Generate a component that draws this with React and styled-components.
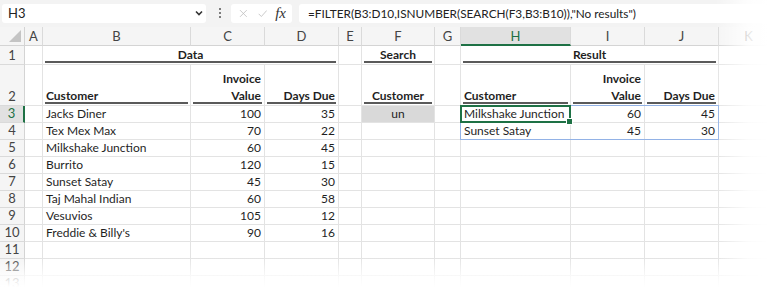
import styled, { createGlobalStyle, css } from "styled-components";

const GlobalStyle = createGlobalStyle`
  html, body {
    margin: 0;
    padding: 0;
    background: #ffffff;
  }
  body {
    font-family: Lato, "Liberation Sans", sans-serif;
    color: #1f1f1f;
  }
`;

const Frame = styled.div`
  position: relative;
  width: 768px;
  height: 287px;
  overflow: hidden;
  background: #ffffff;
`;

const FormulaBar = styled.div`
  display: flex;
  align-items: center;
  height: 27px;
  padding: 0 0 1px 2px;
  box-sizing: border-box;
  background: #f3f3f3;
`;

const NameBox = styled.div`
  display: flex;
  align-items: center;
  justify-content: space-between;
  width: 204px;
  height: 19px;
  box-sizing: border-box;
  padding: 0 2px 0 6px;
  background: #ffffff;
  border-radius: 3px;
  font-size: 13px;
  color: #222;
`;

const Dots = styled.div`
  display: flex;
  flex-direction: column;
  gap: 2px;
  margin: 0 10px 0 13px;
  span {
    width: 2px;
    height: 2px;
    border-radius: 1px;
    background: #555;
  }
`;

const EditButtons = styled.div`
  display: flex;
  align-items: center;
  gap: 10px;
  width: 61px;
  height: 19px;
  box-sizing: border-box;
  padding: 0 6px 0 8px;
  background: #ffffff;
  border-radius: 3px;
`;

const Fx = styled.span`
  font-family: "Liberation Serif", serif;
  font-style: italic;
  font-size: 15px;
  color: #333;
  margin-left: -2px;
`;

const FormulaInput = styled.div`
  flex: 1;
  height: 19px;
  margin-left: 7px;
  padding-left: 9px;
  display: flex;
  align-items: center;
  background: #ffffff;
  border-radius: 3px;
  font-size: 11.8px;
  color: #222;
  white-space: nowrap;
`;

const Sheet = styled.div`
  display: grid;
  grid-template-columns: 25px 18px 148px 74px 74px 23px 73px 26px 110px 74px 74px 60px;
  grid-template-rows: 19px 19px 41px repeat(11, 17px);
  font-size: 12px;
`;

const place = css`
  grid-column: ${(p) => p.$col + 1} / span ${(p) => p.$span || 1};
  grid-row: ${(p) => p.$row + 1} / span ${(p) => p.$rows || 1};
`;

const Corner = styled.div`
  ${place}
  position: relative;
  background: #f5f5f5;
  border-right: 1px solid #d4d4d4;
  border-bottom: 1px solid #d4d4d4;
  &::after {
    content: "";
    position: absolute;
    right: 3px;
    bottom: 3px;
    width: 0;
    height: 0;
    border-left: 12px solid transparent;
    border-bottom: 12px solid #c4c4c4;
  }
`;

const ColHead = styled.div`
  ${place}
  display: flex;
  align-items: center;
  justify-content: center;
  background: ${(p) => (p.$active ? "#e1e1e1" : "#f5f5f5")};
  color: ${(p) => (p.$active ? "#1e7145" : "#444")};
  border-right: 1px solid #dadada;
  border-bottom: ${(p) => (p.$active ? "2px solid #1e7145" : "1px solid #d4d4d4")};
  box-sizing: border-box;
  font-size: 13px;
`;

const RowHead = styled.div`
  ${place}
  display: flex;
  align-items: flex-end;
  justify-content: center;
  box-sizing: border-box;
  padding-bottom: 1px;
  line-height: 15px;
  background: ${(p) => (p.$active ? "#e1e1e1" : "#f5f5f5")};
  color: ${(p) => (p.$active ? "#1e7145" : "#444")};
  border-right: ${(p) => (p.$active ? "2px solid #1e7145" : "1px solid #d4d4d4")};
  border-bottom: 1px solid #dadada;
  font-size: 13px;
`;

const Cell = styled.div`
  ${place}
  position: relative;
  display: flex;
  align-items: ${(p) => (p.$underline ? "flex-end" : "center")};
  justify-content: ${(p) =>
    p.$align === "right" ? "flex-end" : p.$align === "center" ? "center" : "flex-start"};
  text-align: ${(p) => p.$align || "left"};
  padding: 0 3px ${(p) => (p.$underline ? "1px" : "0")} 3px;
  box-sizing: border-box;
  border-right: 1px solid #e3e3e3;
  border-bottom: 1px solid #e3e3e3;
  background: ${(p) => p.$fill || "transparent"};
  font-weight: ${(p) => (p.$bold ? 700 : 400)};
  line-height: ${(p) => (p.$underline ? "17px" : "16px")};
  white-space: nowrap;
  ${(p) =>
    p.$underline &&
    css`
      &::after {
        content: "";
        position: absolute;
        left: 2px;
        right: 2px;
        bottom: 1px;
        height: 2px;
        background: #5a5a5a;
      }
    `}
`;

const Stacked = styled.span`
  display: flex;
  flex-direction: column;
  align-items: flex-end;
`;

const SpillRange = styled.div`
  ${place}
  border: 1px solid #92b2e6;
  margin: -1px 0 0 -1px;
  pointer-events: none;
  z-index: 2;
`;

const ActiveCell = styled.div`
  ${place}
  position: relative;
  border: 2px solid #1e7145;
  margin: -1px 0 0 -1px;
  pointer-events: none;
  z-index: 3;
  &::after {
    content: "";
    position: absolute;
    right: -4px;
    bottom: -4px;
    width: 5px;
    height: 5px;
    background: #1e7145;
    border: 1px solid #ffffff;
  }
`;

const Fade = styled.div`
  position: absolute;
  inset: 0;
  pointer-events: none;
  z-index: 5;
  background:
    linear-gradient(to right, rgba(255, 255, 255, 0) 715px, rgba(255, 255, 255, 0.85) 748px, #ffffff 768px),
    linear-gradient(to bottom, rgba(255, 255, 255, 0) 258px, rgba(255, 255, 255, 0.8) 277px, #ffffff 287px);
`;

const columns = ["A", "B", "C", "D", "E", "F", "G", "H", "I", "J", "K"];

const data = [
  ["Jacks Diner", 100, 35],
  ["Tex Mex Max", 70, 22],
  ["Milkshake Junction", 60, 45],
  ["Burrito", 120, 15],
  ["Sunset Satay", 45, 30],
  ["Taj Mahal Indian", 60, 58],
  ["Vesuvios", 105, 12],
  ["Freddie & Billy's", 90, 16],
];

const results = [
  ["Milkshake Junction", 60, 45],
  ["Sunset Satay", 45, 30],
];

function ChevronDown() {
  return (
    <svg width="10" height="10" viewBox="0 0 10 10">
      <path d="M2 3.5 L5 6.5 L8 3.5" fill="none" stroke="#333" strokeWidth="1.6" />
    </svg>
  );
}

function CrossIcon() {
  return (
    <svg width="13" height="13" viewBox="0 0 13 13">
      <path d="M1.5 1.5 L11.5 11.5 M11.5 1.5 L1.5 11.5" stroke="#bdbdbd" strokeWidth="1.2" />
    </svg>
  );
}

function CheckIcon() {
  return (
    <svg width="14" height="13" viewBox="0 0 14 13">
      <path d="M1 7 L5 11 L13 2" fill="none" stroke="#bdbdbd" strokeWidth="1.2" />
    </svg>
  );
}

function buildCells() {
  const cells = [];
  const rowCount = 13;
  const taken = new Set();
  const mark = (r, c) => taken.add(`${r}-${c}`);

  // row 1 titles
  cells.push(
    <Cell key="data" $row={1} $col={2} $span={3} $align="center" $bold $underline>
      Data
    </Cell>,
    <Cell key="search" $row={1} $col={6} $align="center" $bold $underline>
      Search
    </Cell>,
    <Cell key="result" $row={1} $col={8} $span={3} $align="center" $bold $underline>
      Result
    </Cell>
  );
  [2, 3, 4, 6, 8, 9, 10].forEach((c) => mark(1, c));

  // row 2 headers
  const headers = [
    [2, "Customer", "left"],
    [3, "Invoice|Value", "right"],
    [4, "Days Due", "right"],
    [6, "Customer", "center"],
    [8, "Customer", "left"],
    [9, "Invoice|Value", "right"],
    [10, "Days Due", "right"],
  ];
  headers.forEach(([c, text, align]) => {
    mark(2, c);
    cells.push(
      <Cell key={`h-${c}`} $row={2} $col={c} $align={align} $bold $underline>
        {text.includes("|") ? (
          <Stacked>
            {text.split("|").map((t) => (
              <span key={t}>{t}</span>
            ))}
          </Stacked>
        ) : (
          text
        )}
      </Cell>
    );
  });

  data.forEach(([name, value, days], i) => {
    const r = i + 3;
    [2, 3, 4].forEach((c) => mark(r, c));
    cells.push(
      <Cell key={`n-${r}`} $row={r} $col={2}>{name}</Cell>,
      <Cell key={`v-${r}`} $row={r} $col={3} $align="right">{value}</Cell>,
      <Cell key={`d-${r}`} $row={r} $col={4} $align="right">{days}</Cell>
    );
  });

  mark(3, 6);
  cells.push(
    <Cell key="term" $row={3} $col={6} $align="center" $fill="#d9d9d9">
      un
    </Cell>
  );

  results.forEach(([name, value, days], i) => {
    const r = i + 3;
    [8, 9, 10].forEach((c) => mark(r, c));
    cells.push(
      <Cell key={`rn-${r}`} $row={r} $col={8}>{name}</Cell>,
      <Cell key={`rv-${r}`} $row={r} $col={9} $align="right">{value}</Cell>,
      <Cell key={`rd-${r}`} $row={r} $col={10} $align="right">{days}</Cell>
    );
  });

  for (let r = 1; r <= rowCount; r++) {
    for (let c = 1; c <= columns.length; c++) {
      if (!taken.has(`${r}-${c}`)) {
        cells.push(<Cell key={`e-${r}-${c}`} $row={r} $col={c} />);
      }
    }
  }
  return cells;
}

export default function App() {
  return (
    <Frame>
      <GlobalStyle />
      <FormulaBar>
        <NameBox>
          H3
          <ChevronDown />
        </NameBox>
        <Dots>
          <span />
          <span />
          <span />
        </Dots>
        <EditButtons>
          <CrossIcon />
          <CheckIcon />
          <Fx>fx</Fx>
        </EditButtons>
        <FormulaInput>=FILTER(B3:D10,ISNUMBER(SEARCH(F3,B3:B10)),"No results")</FormulaInput>
      </FormulaBar>
      <Sheet>
        <Corner $row={0} $col={0} />
        {columns.map((letter, i) => (
          <ColHead key={letter} $row={0} $col={i + 1} $active={letter === "H"}>
            {letter}
          </ColHead>
        ))}
        {Array.from({ length: 13 }, (_, i) => (
          <RowHead key={i} $row={i + 1} $col={0} $active={i + 1 === 3}>
            {i + 1}
          </RowHead>
        ))}
        {buildCells()}
        <SpillRange $row={3} $col={8} $span={3} $rows={2} />
        <ActiveCell $row={3} $col={8} />
      </Sheet>
      <Fade />
    </Frame>
  );
}
